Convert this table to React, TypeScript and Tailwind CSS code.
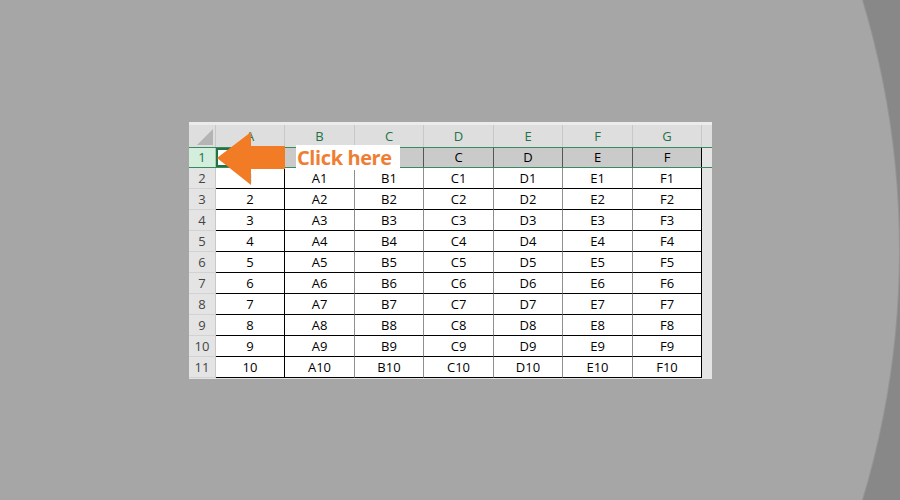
const COLS = ["A", "B", "C", "D", "E", "F", "G"];
const WIDTHS = [69, 70, 69, 70, 69, 70, 69];
// first three cells of row 1 sit under the arrow and the callout
const ROW1 = ["", "", "", "C", "D", "E", "F"];

function dataRow(n: number) {
  return [String(n), `A${n}`, `B${n}`, `C${n}`, `D${n}`, `E${n}`, `F${n}`];
}

function vLine(i: number) {
  // border on the right side of each column
  if (i === 0 || i === 6) return "border-r border-r-black";
  return "border-r border-r-[#8f8f8f]";
}

export default function App() {
  const rows = Array.from({ length: 10 }, (_, i) => dataRow(i + 1));

  return (
    <div className="relative w-[900px] h-[500px] overflow-hidden bg-[#888888] font-['Open_Sans',sans-serif]">
      <svg className="absolute inset-0" width="900" height="500" viewBox="0 0 900 500">
        <circle cx="36" cy="250" r="864" fill="#959595" />
        <circle cx="36" cy="250" r="863" fill="#a6a6a6" />
      </svg>

      <div className="relative pt-[122px] pl-[189px]">
        <div className="relative w-[523px] bg-[#e4e4e4] text-[13px] leading-none">
          <div className="h-[3px] bg-[#ececec]" />

          {/* column headers */}
          <div className="flex h-[22px] bg-[#dedede]">
            <div className="relative w-[27px] border-r border-[#c8c8c8]">
              <div className="absolute right-[2px] bottom-[2px] w-0 h-0 border-l-[16px] border-l-transparent border-b-[16px] border-b-[#b4b4b4]" />
            </div>
            {COLS.map((c, i) => (
              <div
                key={c}
                style={{ width: WIDTHS[i] }}
                className="flex items-center justify-center border-r border-[#c8c8c8] text-[#217346]"
              >
                {c}
              </div>
            ))}
            <div className="flex-1" />
          </div>

          {/* selected row 1 */}
          <div className="flex h-[21px] border-y border-[#3a8a5f] bg-[#cacaca]">
            <div className="flex w-[27px] items-center justify-center bg-[#d3eedd] text-[#217346] border-r border-[#9fcfb3]">
              1
            </div>
            {ROW1.map((v, i) => (
              <div
                key={i}
                style={{ width: WIDTHS[i] }}
                className={`flex items-center justify-center text-black ${
                  i === 6 ? "border-r border-r-black" : "border-r border-r-[#555555]"
                } ${i === 0 ? "border-2 border-[#217346] bg-white" : ""}`}
              >
                {v}
              </div>
            ))}
            <div className="flex-1 bg-[#e4e4e4]" />
          </div>

          {/* data rows */}
          {rows.map((r, ri) => (
            <div key={ri} className="flex h-[21px]">
              <div className="flex w-[27px] items-center justify-center bg-[#e4e4e4] text-[#444444] border-r border-[#c8c8c8] border-b border-b-[#d2d2d2]">
                {ri + 2}
              </div>
              {r.map((v, i) => (
                <div
                  key={i}
                  style={{ width: WIDTHS[i] }}
                  className={`flex items-center justify-center bg-white text-black border-b border-b-black ${vLine(i)}`}
                >
                  {v}
                </div>
              ))}
              <div className="flex-1 bg-[#e4e4e4]" />
            </div>
          ))}
          <div className="h-[1px] bg-[#e4e4e4]" />

          {/* arrow overlay */}
          <svg className="absolute left-0 top-0" width="120" height="70" viewBox="189 122 120 70">
            <polygon
              points="217,158 251,132 251,146 285,146 285,169 251,169 251,185"
              fill="#f27c26"
            />
          </svg>

          {/* callout */}
          <div className="absolute left-[107px] top-[23px] flex h-[25px] w-[104px] items-center bg-white pl-[1px] text-[20px] font-bold text-[#ef7e33] tracking-[-0.4px]">
            Click here
          </div>
        </div>
      </div>
    </div>
  );
}
